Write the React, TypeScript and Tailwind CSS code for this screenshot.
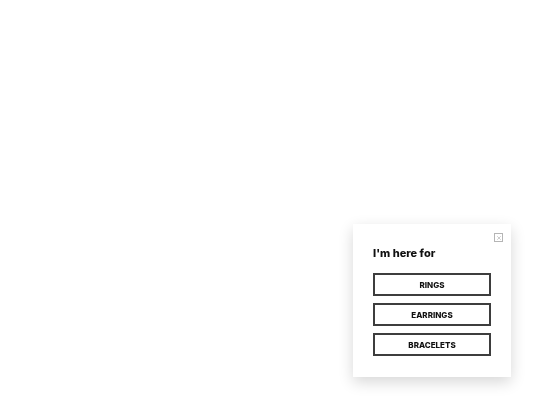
import { X } from 'lucide-react'

const OPTIONS = ['RINGS', 'EARRINGS', 'BRACELETS']

export default function App() {
  return (
    <div className="min-h-screen w-full bg-white" style={{ fontFamily: 'Inter, "Liberation Sans", sans-serif' }}>
      {/* Survey popup */}
      <div className="fixed bottom-[25px] right-[25px] w-[158px] bg-white px-[20px] pt-[21px] pb-[21px] shadow-[0_5px_14px_rgba(0,0,0,0.16)]">
        <button className="absolute right-[8px] top-[9px] flex h-[9px] w-[9px] items-center justify-center border border-[#b5b5b5] text-[#9a9a9a]">
          <X size={6} strokeWidth={2} />
        </button>
        <h2 className="text-[11px] font-extrabold leading-[16px] text-[#111]">I'm here for</h2>
        <div className="mt-[12px] flex flex-col gap-[7px]">
          {OPTIONS.map(o => (
            <button
              key={o}
              className="flex h-[23px] w-full items-center justify-center border-2 border-[#3d3d3d] bg-white text-[8px] font-extrabold leading-none text-[#111]"
            >
              {o}
            </button>
          ))}
        </div>
      </div>
    </div>
  )
}
